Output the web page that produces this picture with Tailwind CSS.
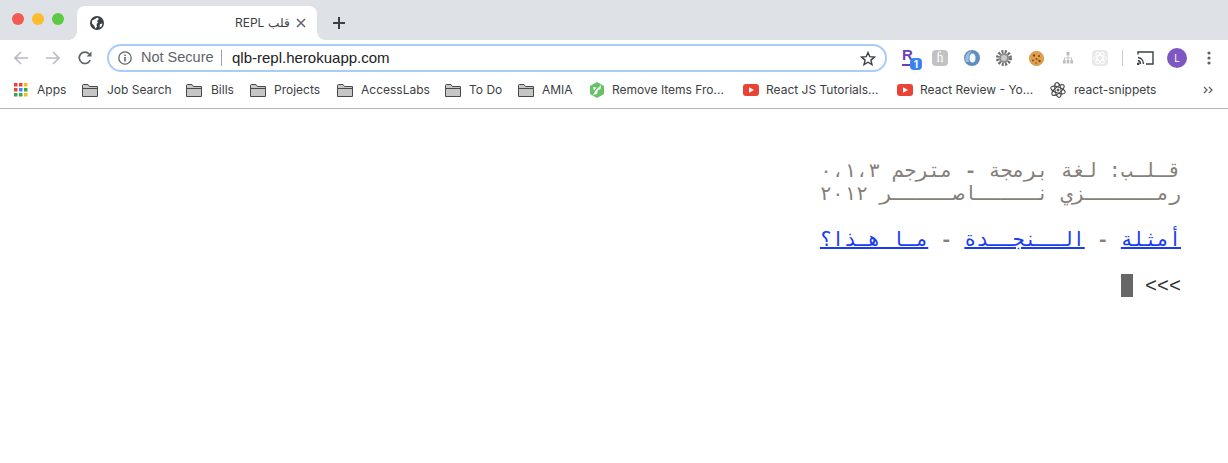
<!DOCTYPE html>
<html lang="en">
<head>
    <meta charset="UTF-8">
    <title>REPL قلب</title>
    <script src="https://cdn.jsdelivr.net/npm/@tailwindcss/browser@4"></script>
</head>
<body class="bg-white overflow-hidden font-['Inter','Noto_Sans',sans-serif]">
    <!-- Tab strip -->
    <div class="h-10 bg-[#dee1e6] flex items-start">
        <div class="flex gap-2 pl-3 pt-[13px] w-[77px] shrink-0">
            <span class="w-3 h-3 rounded-full bg-[#f25a52]"></span>
            <span class="w-3 h-3 rounded-full bg-[#fdbc2e]"></span>
            <span class="w-3 h-3 rounded-full bg-[#5ccb43]"></span>
        </div>
        <div class="relative mt-[6px] h-[34px] w-[240px] shrink-0 bg-white rounded-t-lg flex items-center pl-[13px]">
            <span class="absolute -left-2 bottom-0 w-2 h-2 bg-[radial-gradient(circle_at_0_0,transparent_7.5px,white_8px)]"></span>
            <span class="absolute -right-2 bottom-0 w-2 h-2 bg-[radial-gradient(circle_at_100%_0,transparent_7.5px,white_8px)]"></span>
            <svg width="14" height="14" viewBox="0 0 14 14"><circle cx="7" cy="7" r="7" fill="#3c4043"/><path d="M2 4.500 5 3 7.500 1.500 9 3 7 5 8 6.500 6.500 8 7 10.500 5.500 12.500 4 9.500 2 7.500ZM10 8 12.500 7.500 11.500 10.500 9.500 11.500Z" fill="#fff"/></svg>
            <span dir="ltr" class="ml-[131px] w-[60px] shrink-0 text-xs text-[#3c4043] whitespace-nowrap">REPL قلب</span>
            <svg class="ml-[1px]" width="10" height="10" viewBox="0 0 10 10"><path d="M1 1 9 9M9 1 1 9" stroke="#5f6368" stroke-width="1.500"/></svg>
        </div>
        <svg class="ml-4 mt-[17px]" width="12" height="12" viewBox="0 0 12 12"><path d="M6 0V12M0 6H12" stroke="#3c4043" stroke-width="2"/></svg>
    </div>

    <!-- Toolbar -->
    <div class="h-9 bg-white flex items-center">
        <svg class="ml-[14px]" width="14" height="14" viewBox="0 0 14 14" fill="none" stroke="#b9bcc1" stroke-width="1.600"><path d="M14 7H1M7 1 1 7 7 13"/></svg>
        <svg class="ml-[18px]" width="14" height="14" viewBox="0 0 14 14" fill="none" stroke="#b9bcc1" stroke-width="1.600"><path d="M0 7H13M7 1 13 7 7 13"/></svg>
        <svg class="ml-[18px]" width="14" height="14" viewBox="0 0 14 14" fill="none" stroke="#5f6368" stroke-width="1.700"><path d="M12.200 9A5.700 5.700 0 1 1 11.200 3"/><path d="M13.500 0.500V5.500H8.500Z" fill="#5f6368" stroke="none"/></svg>
        <div class="ml-[15px] w-[780px] shrink-0 h-7 rounded-full border-2 border-[#a9cdf7] flex items-center">
            <svg class="ml-[9px]" width="14" height="14" viewBox="0 0 14 14" fill="none" stroke="#5f6368" stroke-width="1.300"><circle cx="7" cy="7" r="6.200"/><path d="M7 6V10.500M7 3.500V5" stroke-width="1.500"/></svg>
            <span class="ml-[9px] w-[73px] text-[14.5px] text-[#5f6368] whitespace-nowrap font-['Liberation_Sans',sans-serif]">Not Secure</span>
            <span class="ml-[7px] w-px h-4 bg-[#9aa0a6]"></span>
            <span class="ml-[10px] text-[15px] text-[#202124] whitespace-nowrap font-['Liberation_Sans',sans-serif]">qlb-repl.herokuapp.com</span>
            <svg class="ml-auto mr-[9px]" width="16" height="15" viewBox="0 0 16 15" fill="none" stroke="#3c4043" stroke-width="1.400"><path d="M8 1.500 9.800 5.700 14.400 6.100 10.900 9.100 12 13.600 8 11.200 4 13.600 5.100 9.100 1.600 6.100 6.200 5.700Z"/></svg>
        </div>
        <!-- Extensions -->
        <div class="ml-[15px] w-[20px] h-[24px] relative shrink-0">
            <span class="block text-[15px] leading-[18px] font-bold text-[#6b3fb5] font-['Liberation_Sans',sans-serif] border-b-2 border-[#6b3fb5] w-[11px]">R</span>
            <span class="absolute left-[8px] top-[12px] w-3 h-3 rounded-sm bg-[#3b82f0] text-white text-[10px] leading-3 text-center font-bold">1</span>
        </div>
        <span class="ml-[10px] w-4 h-4 rounded-sm bg-[#c2c2c2] text-white text-sm leading-4 text-center font-['Liberation_Serif',serif]">ɦ</span>
        <svg class="ml-4" width="16" height="16" viewBox="0 0 16 16"><circle cx="8" cy="8" r="8" fill="#5f8dbd"/><path d="M2 12C0 8 2 2 8 1 5 3 4 8 5 12Z" fill="#9fc0dd"/><ellipse cx="8.500" cy="8" rx="3" ry="4.500" fill="#f4f8fb"/></svg>
        <svg class="ml-4" width="16" height="16" viewBox="0 0 16 16"><circle cx="8" cy="8" r="6.300" fill="none" stroke="#6d6d6d" stroke-width="3.400" stroke-dasharray="2 1.300"/><circle cx="8" cy="8" r="5" fill="#8f8f8f"/><circle cx="8" cy="8" r="3" fill="#c9c9c9"/></svg>
        <svg class="ml-[17px]" width="15" height="15" viewBox="0 0 15 15"><circle cx="7.500" cy="7.500" r="7.200" fill="#e2a04b" stroke="#c98535" stroke-width="0.600"/><g fill="#7a4a1c"><circle cx="5" cy="4.500" r="1.200"/><circle cx="10" cy="5" r="1.100"/><circle cx="7.500" cy="8" r="1"/><circle cx="4" cy="9.500" r="1"/><circle cx="10.500" cy="10" r="1.200"/><circle cx="7" cy="12" r="0.800"/></g></svg>
        <svg class="ml-[19px]" width="10" height="12" viewBox="0 0 10 12" fill="#bdbdbd"><rect x="3.500" y="0" width="3" height="3.500"/><rect x="0" y="8" width="2.600" height="3.500"/><rect x="3.700" y="8" width="2.600" height="3.500"/><rect x="7.400" y="8" width="2.600" height="3.500"/><path d="M4.600 3.500H5.400V5.500H9V8H8.200V6.300H5.400V8H4.600V6.300H1.800V8H1V5.500H4.600Z"/></svg>
        <span class="ml-[19px] w-4 h-4 rounded-sm bg-[#e8e8e8] flex items-center justify-center">
            <svg width="14" height="14" viewBox="0 0 14 14" fill="none" stroke="#fff" stroke-width="1"><ellipse cx="7" cy="7" rx="6.500" ry="2.500"/><ellipse cx="7" cy="7" rx="6.500" ry="2.500" transform="rotate(60 7 7)"/><ellipse cx="7" cy="7" rx="6.500" ry="2.500" transform="rotate(120 7 7)"/></svg>
        </span>
        <span class="ml-[14px] w-px h-4 bg-[#c8cacd]"></span>
        <svg class="ml-[14px]" width="17" height="14" viewBox="0 0 17 14" fill="none" stroke="#3c4043" stroke-width="1.400"><path d="M1 3.500V1H16V13H9"/><path d="M1 6.500A6.500 6.500 0 0 1 6.500 13M1 9.500A3.500 3.500 0 0 1 3.500 13"/><circle cx="1.200" cy="12.800" r="0.700" fill="#3c4043"/></svg>
        <span class="ml-[13px] w-5 h-5 rounded-full bg-[#7e57c2] text-white text-[10px] leading-5 text-center">L</span>
        <svg class="ml-5" width="4" height="14" viewBox="0 0 4 14" fill="#5f6368"><circle cx="2" cy="2" r="1.600"/><circle cx="2" cy="7" r="1.600"/><circle cx="2" cy="12" r="1.600"/></svg>
    </div>

    <!-- Bookmarks bar -->
    <div class="h-[33px] pb-1 border-b border-[#b5b5b5] flex items-center text-xs text-[#3c4043] whitespace-nowrap">
        <svg class="ml-[14px] shrink-0" width="14" height="14" viewBox="0 0 14 14">
            <rect width="3.500" height="3.500" fill="#ea4335"/><rect x="5" width="3.500" height="3.500" fill="#ea4335"/><rect x="10" width="3.500" height="3.500" fill="#fbbc05"/>
            <rect y="5" width="3.500" height="3.500" fill="#ea4335"/><rect x="5" y="5" width="3.500" height="3.500" fill="#4285f4"/><rect x="10" y="5" width="3.500" height="3.500" fill="#34a853"/>
            <rect y="10" width="3.500" height="3.500" fill="#34a853"/><rect x="5" y="10" width="3.500" height="3.500" fill="#34a853"/><rect x="10" y="10" width="3.500" height="3.500" fill="#fbbc05"/>
        </svg>
        <span class="ml-[9px] w-[45px] shrink-0">Apps</span>
        <svg class="shrink-0" width="16" height="13" viewBox="0 0 16 13"><path d="M.500 12.500V1.500Q.500.500 1.500.500H6L7.500 2.500H15.500V12.500Z" fill="#c6c6c6" stroke="#4a4a4a"/><path d="M1 4.500H15" stroke="#4a4a4a"/></svg>
        <span class="ml-[9px] w-[79px] shrink-0">Job Search</span>
        <svg class="shrink-0" width="16" height="13" viewBox="0 0 16 13"><path d="M.500 12.500V1.500Q.500.500 1.500.500H6L7.500 2.500H15.500V12.500Z" fill="#c6c6c6" stroke="#4a4a4a"/><path d="M1 4.500H15" stroke="#4a4a4a"/></svg>
        <span class="ml-[9px] w-[39px] shrink-0">Bills</span>
        <svg class="shrink-0" width="16" height="13" viewBox="0 0 16 13"><path d="M.500 12.500V1.500Q.500.500 1.500.500H6L7.500 2.500H15.500V12.500Z" fill="#c6c6c6" stroke="#4a4a4a"/><path d="M1 4.500H15" stroke="#4a4a4a"/></svg>
        <span class="ml-[8px] w-[63px] shrink-0">Projects</span>
        <svg class="shrink-0" width="16" height="13" viewBox="0 0 16 13"><path d="M.500 12.500V1.500Q.500.500 1.500.500H6L7.500 2.500H15.500V12.500Z" fill="#c6c6c6" stroke="#4a4a4a"/><path d="M1 4.500H15" stroke="#4a4a4a"/></svg>
        <span class="ml-[8px] w-[84px] shrink-0">AccessLabs</span>
        <svg class="shrink-0" width="16" height="13" viewBox="0 0 16 13"><path d="M.500 12.500V1.500Q.500.500 1.500.500H6L7.500 2.500H15.500V12.500Z" fill="#c6c6c6" stroke="#4a4a4a"/><path d="M1 4.500H15" stroke="#4a4a4a"/></svg>
        <span class="ml-[8px] w-[49px] shrink-0">To Do</span>
        <svg class="shrink-0" width="16" height="13" viewBox="0 0 16 13"><path d="M.500 12.500V1.500Q.500.500 1.500.500H6L7.500 2.500H15.500V12.500Z" fill="#c6c6c6" stroke="#4a4a4a"/><path d="M1 4.500H15" stroke="#4a4a4a"/></svg>
        <span class="ml-[8px] w-[47px] shrink-0">AMIA</span>
        <svg class="shrink-0" width="16" height="16" viewBox="0 0 16 16"><path d="M8 0 15 4V12L8 16 1 12V4Z" fill="#66c266"/><path d="M4 13 7 8 12 3 11.500 7 9 8 8 12ZM4 5 7.500 5.500 5 8.500Z" fill="#fff"/></svg>
        <span class="ml-[7px] w-[131px] shrink-0">Remove Items Fro...</span>
        <svg class="shrink-0" width="16" height="12" viewBox="0 0 16 12"><rect width="16" height="12" rx="3" fill="#ea4335"/><path d="M6 3.200V8.800L11 6Z" fill="#fff"/></svg>
        <span class="ml-[7px] w-[131px] shrink-0">React JS Tutorials...</span>
        <svg class="shrink-0" width="16" height="12" viewBox="0 0 16 12"><rect width="16" height="12" rx="3" fill="#ea4335"/><path d="M6 3.200V8.800L11 6Z" fill="#fff"/></svg>
        <span class="ml-[7px] w-[130px] shrink-0">React Review - Yo...</span>
        <svg class="shrink-0" width="16" height="16" viewBox="0 0 16 16" fill="none" stroke="#4a4a4a" stroke-width="1"><ellipse cx="8" cy="8" rx="7.500" ry="3" transform="rotate(20 8 8)"/><ellipse cx="8" cy="8" rx="7.500" ry="3" transform="rotate(80 8 8)"/><ellipse cx="8" cy="8" rx="7.500" ry="3" transform="rotate(140 8 8)"/><circle cx="8" cy="8" r="1" fill="#4a4a4a"/></svg>
        <span class="ml-[8px] w-[129px] shrink-0">react-snippets</span>
        <svg class="shrink-0" width="10" height="8" viewBox="0 0 10 8" fill="none" stroke="#5f6368" stroke-width="1.300"><path d="M1 1 4 4 1 7M6 1 9 4 6 7"/></svg>
    </div>

    <!-- REPL -->
    <main dir="rtl" class="pt-[51px] pr-[47px] text-xl leading-[23px] font-['Liberation_Mono','DejaVu_Sans_Mono',monospace]">
        <p class="text-[#85807a] whitespace-pre">قـلـب: لغة برمجة <span class="font-bold">-</span> مترجم ٠،١،٣</p>
        <p class="text-[#85807a] whitespace-pre">رمــــــزي نـــــاصـــــر ٢٠١٢</p>
        <p class="mt-[23px] whitespace-pre text-[#1a3cf0]"><a href="#" class="underline decoration-2">أمثلة</a> <span class="text-[#85807a] font-bold">-</span> <a href="#" class="underline decoration-2">الــنجــدة</a> <span class="text-[#85807a] font-bold">-</span> <a href="#" class="underline decoration-2">مـا هـذا؟</a></p>
        <div class="mt-[22px] flex items-center h-[23px]">
            <span dir="ltr" class="text-[#333] pt-[2px]">&lt;&lt;&lt;</span>
            <span class="mr-[12px] w-3 h-[23px] bg-[#666]"></span>
        </div>
    </main>
</body>
</html>
